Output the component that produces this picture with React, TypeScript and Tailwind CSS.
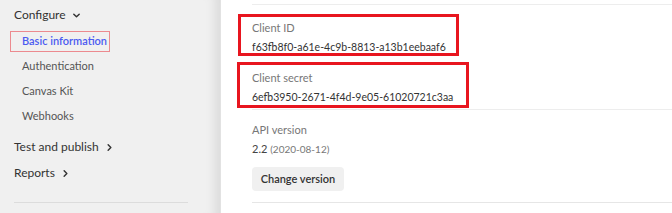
import React from 'react';

const font = { fontFamily: 'Lato, "Noto Sans", sans-serif' };

const Chevron = ({ dir }: { dir: 'down' | 'right' }) => (
  <svg
    viewBox="0 0 10 10"
    className="w-[9px] h-[9px]"
    fill="none"
    stroke="#333"
    strokeWidth="1.6"
    strokeLinecap="round"
    strokeLinejoin="round"
  >
    {dir === 'down' ? <path d="M2 3.5 L5 6.5 L8 3.5" /> : <path d="M3.5 2 L6.5 5 L3.5 8" />}
  </svg>
);

const Sidebar = () => (
  <aside className="w-[221px] h-full shrink-0 bg-[#f0f0f0] shadow-[inset_-14px_0_12px_-10px_rgba(0,0,0,0.10)] border-r border-[#e2e2e2] flex flex-col whitespace-nowrap">
    <div className="flex items-center gap-[6px] pl-[14px] pt-[8px] h-[22px] text-[12px] text-[#333]">
      Configure <Chevron dir="down" />
    </div>
    <div className="ml-[10px] mt-[9px] w-[100px] h-[21px] border border-[#ec8a8f] flex items-center pl-[11px] text-[11px] text-[#4c5cf0] font-semibold">
      Basic information
    </div>
    <div className="flex flex-col text-[11px] text-[#555]">
      <div className="pl-[22px] h-[25px] flex items-center mt-[2px]">Authentication</div>
      <div className="pl-[22px] h-[25px] flex items-center">Canvas Kit</div>
      <div className="pl-[22px] h-[24px] flex items-center">Webhooks</div>
    </div>
    <div className="flex items-center gap-[6px] pl-[14px] mt-[7px] h-[24px] text-[12px] text-[#333]">
      Test and publish <Chevron dir="right" />
    </div>
    <div className="flex items-center gap-[6px] pl-[14px] mt-[2px] h-[24px] text-[12px] text-[#333]">
      Reports <Chevron dir="right" />
    </div>
    <div className="ml-[14px] mt-[17px] w-[174px] h-px bg-[#dcdcdc]" />
  </aside>
);

const Field = ({ label, value }: { label: string; value: string }) => (
  <div className="flex flex-col gap-[3px] whitespace-nowrap">
    <div className="text-[11px] text-[#777] leading-[16px]">{label}</div>
    <div className="text-[10.5px] text-[#333] leading-[16px]">{value}</div>
  </div>
);

export default function App() {
  return (
    <div className="w-[672px] h-[213px] flex bg-white overflow-hidden" style={font}>
      <Sidebar />
      <main className="flex-1 flex flex-col pt-[4px] whitespace-nowrap">
        <div className="ml-[31px] h-px bg-[#ededed]" />
        <div className="ml-[17px] mt-[9px] w-[221px] h-[42px] border-[3px] border-[#e8151f] pl-[11px] pt-[3px]">
          <Field label="Client ID" value="f63fb8f0-a61e-4c9b-8813-a13b1eebaaf6" />
        </div>
        <div className="ml-[16px] mt-[6px] w-[232px] h-[46px] border-[3px] border-[#e8151f] pl-[12px] pt-[5px]">
          <Field label="Client secret" value="6efb3950-2671-4f4d-9e05-61020721c3aa" />
        </div>
        <div className="ml-[31px] mt-[1px] h-px bg-[#ededed]" />
        <div className="ml-[31px] mt-[12px] flex flex-col gap-[3px]">
          <div className="text-[11px] text-[#777] leading-[16px]">API version</div>
          <div className="text-[11px] text-[#444] leading-[16px]">
            2.2 <span className="text-[10px] text-[#777]">(2020-08-12)</span>
          </div>
        </div>
        <button className="ml-[31px] mt-[10px] w-[92px] h-[24px] rounded-[4px] bg-[#f0f0f0] text-[11px] text-[#333] font-semibold">
          Change version
        </button>
        <div className="ml-[31px] mt-[11px] h-px bg-[#e6e6e6]" />
      </main>
    </div>
  );
}
